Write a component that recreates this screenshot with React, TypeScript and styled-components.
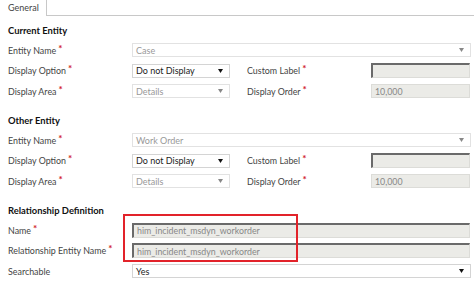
import React, { FC } from 'react';
import styled, { createGlobalStyle } from 'styled-components';

const GlobalStyle = createGlobalStyle`
	html, body {
		margin: 0;
		padding: 0;
		background: #fff;
	}
	body {
		font-family: 'Lato', 'Open Sans', sans-serif;
		color: #444;
	}
`;

const Root = styled.div`
	width: 474px;
	height: 291px;
	overflow: hidden;
	background: #fff;
`;

const TabBar = styled.div`
	display: flex;
	height: 16px;
`;

const Tab = styled.div`
	padding: 0 8px 0 8px;
	font-size: 9px;
	line-height: 16px;
	color: #444;
	border-right: 1px solid #c8c8c8;
	width: 30px;
`;

const TabFiller = styled.div`
	flex: 1;
	border-bottom: 1px solid #c8c8c8;
`;

const Form = styled.div`
	display: flex;
	flex-direction: column;
	gap: 10.5px;
	padding: 6px 0 0 8px;
`;

const Section = styled.section`
	position: relative;
`;

const Heading = styled.div`
	font-size: 9.4px;
	font-weight: 700;
	line-height: 18px;
	color: #111;
`;

const Row = styled.div`
	display: grid;
	grid-template-columns: 124px 98px 17px 124px 99px;
	align-items: center;
	height: 20.5px;
`;

const Label = styled.div`
	font-size: 8.9px;
	color: #444;
	white-space: nowrap;
`;

const Star = styled.span`
	color: #d0212b;
	margin-left: 2px;
	font-size: 10px;
	font-weight: 700;
	vertical-align: 2px;
	line-height: 0;
`;

const SelectBox = styled.div<{ $enabled?: boolean; $wide?: boolean }>`
	grid-column: ${(p) => (p.$wide ? '2 / 6' : '2 / 3')};
	margin-right: ${(p) => (p.$wide ? '-1px' : '0')};
	height: 14px;
	box-sizing: border-box;
	display: flex;
	align-items: center;
	justify-content: space-between;
	padding: 0 6px 0 3px;
	background: #fff;
	border: 1px solid ${(p) => (p.$enabled ? '#d4d4d4' : '#e2e2e2')};
	font-size: 9px;
	color: ${(p) => (p.$enabled ? '#222' : '#999')};
`;

const Arrow = styled.svg<{ $enabled?: boolean }>`
	width: 5px;
	height: 4px;
	fill: ${(p) => (p.$enabled ? '#111' : '#888')};
	flex: none;
`;

const TextBox = styled.div<{ $locked?: boolean; $wide?: boolean }>`
	grid-column: ${(p) => (p.$wide ? '2 / 6' : '5 / 6')};
	height: ${(p) => (p.$locked ? '15px' : '14px')};
	box-sizing: border-box;
	display: flex;
	align-items: center;
	padding: 0 3px;
	background: #ebebe7;
	border: 1px solid #dcdcd8;
	${(p) =>
		p.$locked &&
		`
		border-top: 2px solid #6a6a6a;
		border-left: 2px solid #6a6a6a;
	`}
	font-size: 8.8px;
	color: #888;
	white-space: nowrap;
	overflow: hidden;
`;

const SideLabel = styled(Label)`
	grid-column: 4 / 5;
`;

const Highlight = styled.div`
	position: absolute;
	left: 115px;
	top: 12px;
	width: 175px;
	height: 48px;
	box-sizing: border-box;
	border: 2px solid #e2232a;
	pointer-events: none;
`;

const Req: FC<{ text: string; required?: boolean }> = ({ text, required = true }) => (
	<>
		{text}
		{required && <Star>*</Star>}
	</>
);

const Select: FC<{ value: string; enabled?: boolean; wide?: boolean }> = ({ value, enabled, wide }) => (
	<SelectBox $enabled={enabled} $wide={wide}>
		<span>{value}</span>
		<Arrow $enabled={enabled} viewBox='0 0 5 4'>
			<polygon points='0,0 5,0 2.5,4' />
		</Arrow>
	</SelectBox>
);

const EntitySection: FC<{ title: string; entity: string }> = ({ title, entity }) => (
	<Section>
		<Heading>{title}</Heading>
		<Row>
			<Label>
				<Req text='Entity Name' />
			</Label>
			<Select value={entity} wide />
		</Row>
		<Row>
			<Label>
				<Req text='Display Option' />
			</Label>
			<Select value='Do not Display' enabled />
			<SideLabel>
				<Req text='Custom Label' />
			</SideLabel>
			<TextBox $locked />
		</Row>
		<Row>
			<Label>
				<Req text='Display Area' />
			</Label>
			<Select value='Details' />
			<SideLabel>
				<Req text='Display Order' />
			</SideLabel>
			<TextBox>10,000</TextBox>
		</Row>
	</Section>
);

const App: FC = () => {
	return (
		<Root>
			<GlobalStyle />
			<TabBar>
				<Tab>General</Tab>
				<TabFiller />
			</TabBar>
			<Form>
				<EntitySection title='Current Entity' entity='Case' />
				<EntitySection title='Other Entity' entity='Work Order' />
				<Section>
					<Heading>Relationship Definition</Heading>
					<Row>
						<Label>
							<Req text='Name' />
						</Label>
						<TextBox $locked $wide>
							him_incident_msdyn_workorder
						</TextBox>
					</Row>
					<Row>
						<Label>
							<Req text='Relationship Entity Name' />
						</Label>
						<TextBox $locked $wide>
							him_incident_msdyn_workorder
						</TextBox>
					</Row>
					<Row>
						<Label>
							<Req text='Searchable' required={false} />
						</Label>
						<Select value='Yes' enabled wide />
					</Row>
					<Highlight />
				</Section>
			</Form>
		</Root>
	);
};

export default App;
